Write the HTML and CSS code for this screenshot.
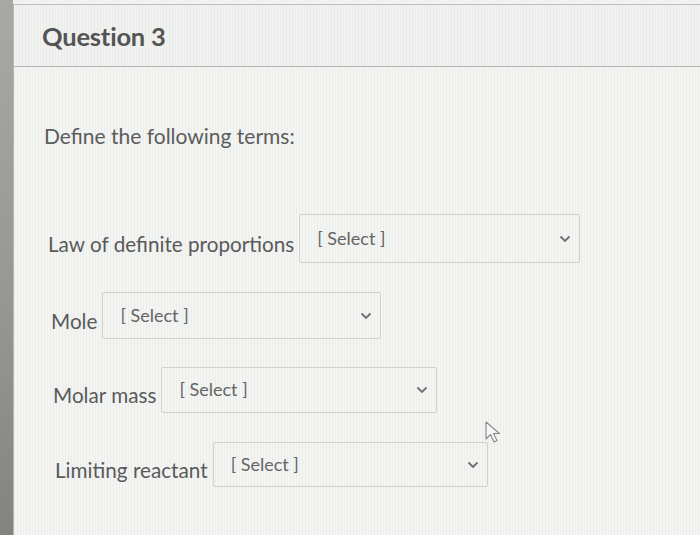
FILE: index.html
```html
<!DOCTYPE html>
<html>
<head>
<meta charset="utf-8">
<link rel="stylesheet" href="styles.css">
</head>
<body>
<div class="screen">
  <div class="bezel"></div>
  <div class="card">
    <div class="card-header">
      <h2 class="title">Question 3</h2>
    </div>
    <div class="card-body">
      <p class="prompt">Define the following terms:</p>
      <div class="row row-1">
        <span class="label">Law of definite proportions</span>
        <div class="select select-1"><span class="select-text">[ Select ]</span><svg class="chev" width="12" height="8" viewBox="0 0 12 8"><path d="M1.5 1.5 L6 6 L10.5 1.5" fill="none" stroke="#6e6e6e" stroke-width="1.8"/></svg></div>
      </div>
      <div class="row row-2">
        <span class="label">Mole</span>
        <div class="select select-2"><span class="select-text">[ Select ]</span><svg class="chev" width="12" height="8" viewBox="0 0 12 8"><path d="M1.5 1.5 L6 6 L10.5 1.5" fill="none" stroke="#6e6e6e" stroke-width="1.8"/></svg></div>
      </div>
      <div class="row row-3">
        <span class="label">Molar mass</span>
        <div class="select select-3"><span class="select-text">[ Select ]</span><svg class="chev" width="12" height="8" viewBox="0 0 12 8"><path d="M1.5 1.5 L6 6 L10.5 1.5" fill="none" stroke="#6e6e6e" stroke-width="1.8"/></svg></div>
      </div>
      <div class="row row-4">
        <span class="label">Limiting reactant</span>
        <div class="select select-4"><span class="select-text">[ Select ]</span><svg class="chev" width="12" height="8" viewBox="0 0 12 8"><path d="M1.5 1.5 L6 6 L10.5 1.5" fill="none" stroke="#6e6e6e" stroke-width="1.8"/></svg></div>
      </div>
    </div>
  </div>
  <svg class="cursor" width="20" height="26" viewBox="0 0 20 26"><path d="M1 1 L1 18 L5.5 13.5 L9 21 L12 19.5 L8.5 12.5 L14.5 12.5 Z" fill="#f7f7f7" stroke="#8a8a8a" stroke-width="1.1" stroke-linejoin="round"/></svg>
</div>
</body>
</html>
```
FILE: styles.css
```css
html, body {
  margin: 0;
  padding: 0;
}
body {
  width: 700px;
  height: 535px;
  overflow: hidden;
  font-family: Lato, "Open Sans", sans-serif;
}
.screen {
  position: relative;
  display: flex;
  width: 700px;
  height: 535px;
  background: repeating-linear-gradient(90deg, #f4f4f2 0 2px, #e9eeeb 2px 3px);
}
.bezel {
  width: 13px;
  flex: none;
  background: linear-gradient(180deg, #aaa8a4 0%, #97958f 60%, #85837f 100%);
}
.card {
  flex: 1;
  margin-top: 4px;
  border-left: 1px solid #b5b5b3;
  border-top: 1px solid #bdbdbb;
  display: flex;
  flex-direction: column;
}
.card-header {
  height: 61px;
  border-bottom: 1px solid #b3b3b1;
  background: repeating-linear-gradient(90deg, #f1f1ef 0 2px, #e9ecea 2px 3px);
  display: flex;
  align-items: center;
}
.title {
  margin: 0 0 0 28px;
  font-size: 25.5px;
  font-weight: 700;
  color: #545454;
  letter-spacing: -0.2px;
}
.card-body {
  display: flex;
  flex-direction: column;
}
.prompt {
  margin: 57px 0 0 30px;
  font-size: 21px;
  color: #5c5c5c;
  line-height: 24px;
}
.row {
  display: flex;
  align-items: center;
}
.row-1 { margin: 66px 0 0 34px; }
.row-2 { margin: 29px 0 0 37px; }
.row-3 { margin: 28px 0 0 39px; }
.row-4 { margin: 29px 0 0 41px; }
.label {
  font-size: 20.7px;
  color: #5a5a5a;
  padding-top: 10px;
  white-space: nowrap;
}
.select {
  margin-left: 5px;
  height: 47px;
  box-sizing: border-box;
  border: 1px solid #cfd1cf;
  border-radius: 2px;
  display: flex;
  align-items: center;
  justify-content: space-between;
  padding: 0 8px 0 17px;
}
.select-1 { width: 281px; height: 49px; }
.select-2 { width: 279px; }
.select-3 { width: 276px; height: 46px; }
.select-4 { width: 275px; height: 45px; }
.select-text {
  font-size: 18px;
  color: #656565;
  margin-top: -2px;
}
.chev {
  flex: none;
}
.cursor {
  position: absolute;
  left: 485px;
  top: 421px;
}
```
